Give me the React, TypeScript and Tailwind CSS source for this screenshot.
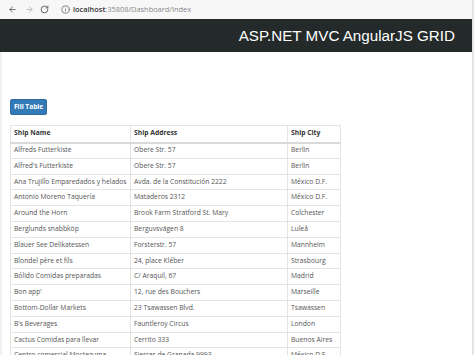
import { ArrowLeft, ArrowRight, RotateCw, Info } from "lucide-react";

const rows: [string, string, string][] = [
  ["Alfreds Futterkiste", "Obere Str. 57", "Berlin"],
  ["Alfred's Futterkiste", "Obere Str. 57", "Berlin"],
  ["Ana Trujillo Emparedados y helados", "Avda. de la Constitución 2222", "México D.F."],
  ["Antonio Moreno Taquería", "Mataderos 2312", "México D.F."],
  ["Around the Horn", "Brook Farm Stratford St. Mary", "Colchester"],
  ["Berglunds snabbköp", "Berguvsvägen 8", "Luleå"],
  ["Blauer See Delikatessen", "Forsterstr. 57", "Mannheim"],
  ["Blondel père et fils", "24, place Kléber", "Strasbourg"],
  ["Bólido Comidas preparadas", "C/ Araquil, 67", "Madrid"],
  ["Bon app'", "12, rue des Bouchers", "Marseille"],
  ["Bottom-Dollar Markets", "23 Tsawassen Blvd.", "Tsawassen"],
  ["B's Beverages", "Fauntleroy Circus", "London"],
  ["Cactus Comidas para llevar", "Cerrito 333", "Buenos Aires"],
  ["Centro comercial Moctezuma", "Sierras de Granada 9993", "México D.F."],
];

const App = () => {
  return (
    <div className="w-[474px] h-[355px] overflow-hidden bg-white flex">
      <div className="flex-1 flex flex-col min-w-0">
        {/* browser chrome */}
        <div className="h-[19px] bg-[#f7f7f7] flex items-center pl-[8px] text-[#5f6368] shrink-0">
          <ArrowLeft size={9} strokeWidth={2.4} />
          <ArrowRight size={9} strokeWidth={2.4} className="ml-[8px] text-[#b8b8b8]" />
          <RotateCw size={9} strokeWidth={2.6} className="ml-[6px]" />
          <Info size={9} strokeWidth={2} className="ml-[12px]" />
          <div
            className="ml-[3px] text-[7.4px] leading-none"
            style={{ fontFamily: "'Open Sans', sans-serif" }}
          >
            <span className="text-[#333] font-semibold">localhost</span>
            <span className="text-[#888]">:35808/Dashboard/Index</span>
          </div>
        </div>

        {/* app header */}
        <div className="h-[33px] bg-[#242a2a] flex items-center justify-end pr-[17px] shrink-0">
          <div
            className="text-white text-[15.2px] leading-none"
            style={{ fontFamily: "'Liberation Sans', Arial, sans-serif" }}
          >
            ASP.NET MVC AngularJS GRID
          </div>
        </div>

        {/* content */}
        <div
          className="flex-1 flex flex-col items-start pl-[8px] pt-[47px] border-l-[2px] border-[#f0f0f0]"
          style={{ fontFamily: "'Open Sans', sans-serif" }}
        >
          <button className="block h-[16px] px-[3px] bg-[#337ab7] border border-[#2e6da4] rounded-[2px] text-white text-[6.6px] font-bold leading-none">
            Fill Table
          </button>

          <table className="mt-[10px] border-collapse text-[6.75px] leading-none">
            <thead>
              <tr className="h-[17px]">
                <th className="w-[120px] text-left font-bold text-[#333] px-[3px] border border-[#e4e4e4] border-b-[2px] border-b-[#dadada]">
                  Ship Name
                </th>
                <th className="w-[157px] text-left font-bold text-[#333] px-[3px] border border-[#e4e4e4] border-b-[2px] border-b-[#dadada]">
                  Ship Address
                </th>
                <th className="w-[53px] text-left font-bold text-[#333] px-[3px] border border-[#e4e4e4] border-b-[2px] border-b-[#dadada]">
                  Ship City
                </th>
              </tr>
            </thead>
            <tbody>
              {rows.map((r) => (
                <tr key={r[0]} className="h-[15.8px]">
                  {r.map((c, i) => (
                    <td
                      key={i}
                      className="px-[3px] text-[#555] whitespace-nowrap border border-[#e4e4e4]"
                    >
                      {c}
                    </td>
                  ))}
                </tr>
              ))}
            </tbody>
          </table>
        </div>
      </div>
      <div className="w-[2px] bg-[#e4e4e4] shrink-0" />
    </div>
  );
};

export default App;
